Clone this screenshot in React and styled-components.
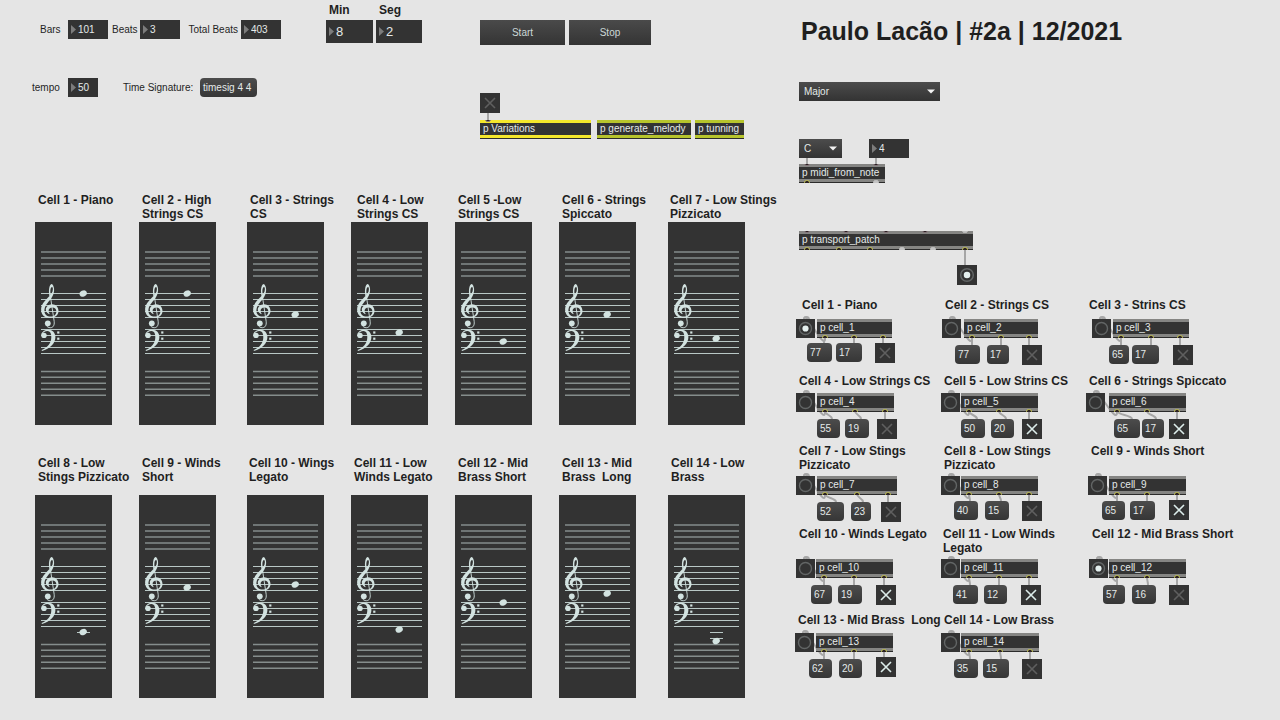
import styled, { createGlobalStyle } from 'styled-components';

const GlobalStyles = createGlobalStyle`
  * {
    box-sizing: border-box;
  }
  body {
    margin: 0;
    background: #e5e5e5;
    color: #1f1f1f;
    font: 10px/14px "Liberation Sans", Arial, sans-serif;
  }
  button, input, select {
    margin: 0;
    padding: 0;
    border: 0;
    border-radius: 0;
    font: inherit;
    color: #e4eae9;
  }
`;

const Patcher = styled.div`
  display: grid;
  grid-template-columns: 796fr 484fr;
`;

const Controls = styled.section`
  display: grid;
  grid-template-columns: 294fr 154fr 316fr;
  padding: 20px 0 54px 32px;
`;

const Row = styled.div`
  display: flex;
  align-items: center;
  gap: ${p => p.$gap || 0}px;
  padding-left: ${p => p.$indent || 0}px;
  margin-top: ${p => p.$top || 0}px;
`;

const Field = styled.label`
  display: flex;
  align-items: center;
`;

const FieldName = styled.span`
  width: ${p => p.$w}px;
  padding-right: ${p => (p.$end ? 3 : 0)}px;
  text-align: ${p => (p.$end ? 'right' : 'left')};
  white-space: nowrap;
`;

const Clock = styled.div`
  display: flex;
  align-items: flex-start;
  gap: 3px;
  margin-top: -17px;
`;

const ClockField = styled.label`
  display: flex;
  flex-direction: column;
  gap: 3px;
  font-size: 12px;
  font-weight: bold;
  span {
    padding-left: 3px;
  }
`;

const NumberFrame = styled.div`
  display: flex;
  align-items: center;
  gap: 2px;
  width: ${p => p.$w}px;
  height: ${p => (p.$large ? 23 : 19)}px;
  padding-left: 3px;
  background: #333;
  font-size: ${p => (p.$large ? 13 : 10)}px;
  font-weight: normal;
  svg {
    flex: none;
  }
  input {
    width: 100%;
    min-width: 0;
    background: none;
  }
`;

const TextButton = styled.button`
  width: ${p => p.$w}px;
  height: 25px;
  background: linear-gradient(#4a4a4a, #343434);
  color: #ccd8d7;
`;

const Message = styled.button`
  width: ${p => p.$w}px;
  height: 19px;
  padding: 0 3px;
  border-radius: 4px;
  background: linear-gradient(#4c4c4c, #363636);
  text-align: left;
  white-space: nowrap;
`;

const bands = {
  grey: '#858583',
  yellow: '#f4e72b',
  green: '#b7c52c',
};

const ObjectBox = styled.button`
  position: relative;
  display: block;
  width: ${p => p.$w}px;
  height: 19px;
  padding: 0 3px 1px;
  overflow: hidden;
  background: linear-gradient(
    ${p => bands[p.$band]} 3px,
    #333 3px 15px,
    ${p => bands[p.$band]} 15px 18px,
    #2b2b2b 18px
  );
  text-align: left;
  white-space: nowrap;
`;

const Port = styled.i`
  position: absolute;
  left: ${p => p.$x - 3}px;
  ${p => (p.$out ? 'bottom: -2px' : 'top: -3px')};
  width: 6px;
  height: 5px;
  border: 1px solid ${p => (p.$plain ? '#c4c4c4' : p.$out ? '#c3c353' : '#8f7f85')};
  border-radius: 3px;
  background: ${p => (p.$plain ? '#c4c4c4' : '#2c2224')};
`;

const MenuFrame = styled.div`
  position: relative;
  width: ${p => p.$w}px;
  height: 19px;
  select {
    appearance: none;
    width: 100%;
    height: 100%;
    padding: 0 5px;
    background: linear-gradient(#4c4c4c, #333);
  }
  svg {
    position: absolute;
    right: 5px;
    top: 7px;
    pointer-events: none;
  }
`;

const ToggleFrame = styled.span`
  display: grid;
  width: 20px;
  height: 20px;
  background: #333;
  input, svg {
    grid-area: 1 / 1;
  }
  input {
    appearance: none;
    width: 20px;
    height: 20px;
  }
  svg {
    pointer-events: none;
    stroke: #5f5f5f;
  }
  input:checked + svg {
    stroke: #dcecea;
  }
`;

const BangButton = styled.button`
  display: block;
  width: ${p => p.$size}px;
  height: ${p => p.$size}px;
  background: #333;
  svg {
    display: block;
  }
`;

const Canvas = styled.div`
  position: relative;
  height: ${p => p.$h}px;
`;

const Node = styled.div`
  position: absolute;
  left: ${p => p.$x}px;
  top: ${p => p.$y}px;
`;

const Wires = styled.svg`
  position: absolute;
  left: 0;
  top: 0;
  overflow: visible;
  fill: none;
  stroke: #a6a6a6;
  stroke-width: 2;
  pointer-events: none;
`;

const Staves = styled.section`
  display: grid;
  grid-template-columns: 104fr 108fr 104fr 104fr 104fr 109fr 128fr;
  padding-left: 35px;
  margin-bottom: 31px;
`;

const StaffTitle = styled.h2`
  height: ${p => p.$h}px;
  margin: 0;
  padding-left: ${p => p.$x}px;
  font-size: 12px;
  line-height: 14px;
  white-space: pre;
`;

const StaffPanel = styled.svg`
  display: block;
  background: #333;
`;

const PatchTitle = styled.h1`
  margin: 0 0 36px;
  padding: 16px 0 0 5px;
  font-size: 25px;
  line-height: 30px;
  white-space: nowrap;
`;

const MenuRow = styled.div`
  padding-left: 3px;
  margin-bottom: 38px;
`;

const CellRow = styled.section`
  display: grid;
  grid-template-columns: 145fr 145fr 194fr;
`;

const CellTitle = styled.h3`
  height: ${p => p.$h}px;
  margin: 0;
  padding-left: ${p => p.$x}px;
  font-size: 12px;
  line-height: 14px;
  white-space: pre;
`;

const NumberBox = ({ value, w, large, label }) => (
  <NumberFrame $w={w} $large={large}>
    <svg width="5" height="9" viewBox="0 0 5 9">
      <path d="M0 0L5 4.5L0 9Z" fill="#7c7c7c" />
    </svg>
    <input defaultValue={value} aria-label={label} />
  </NumberFrame>
);

const Menu = ({ w, label, options }) => (
  <MenuFrame $w={w}>
    <select aria-label={label}>
      {options.map(o => <option key={o}>{o}</option>)}
    </select>
    <svg width="8" height="5" viewBox="0 0 8 5">
      <path d="M0 0.5H8L4 4.5Z" fill="#f2f2f2" />
    </svg>
  </MenuFrame>
);

const Toggle = ({ on, label }) => (
  <ToggleFrame>
    <input type="checkbox" defaultChecked={on} aria-label={label} />
    <svg width="20" height="20" viewBox="0 0 20 20" strokeWidth="1.6">
      <path d="M5 5L15 15M15 5L5 15" />
    </svg>
  </ToggleFrame>
);

const Bang = ({ lit, label, size = 19 }) => (
  <BangButton aria-label={label} $size={size}>
    <svg width={size} height={size} viewBox="0 0 19 19">
      <circle cx="9.5" cy="9.5" r="6" fill="none" stroke="#626565" strokeWidth="1.4" />
      {lit && <circle cx="9.5" cy="9.5" r="3.1" fill="#e4efee" />}
    </svg>
  </BangButton>
);

const PatchObject = ({ w, band = 'grey', ins = [], outs = [], plain = [], children }) => (
  <ObjectBox $w={w} $band={band}>
    {ins.map(x => <Port key={`i${x}`} $x={x} $plain={plain.includes(`i${x}`)} />)}
    {outs.map(x => <Port key={`o${x}`} $x={x} $out $plain={plain.includes(`o${x}`)} />)}
    {children}
  </ObjectBox>
);

const ledgers = [137.5, 143.5];

const Staff = ({ title, note, head, tx = 3 }) => (
  <div>
    <StaffTitle $h={head} $x={tx}>{title}</StaffTitle>
    <StaffPanel width="77" height="203" viewBox="0 0 77 203">
      <g stroke="#858d8c" strokeWidth="1.6">
        {[30, 36, 42, 48, 54, 149.5, 155.3, 161.3, 167.3, 173.3].map(y => (
          <path key={y} d={`M6 ${y}H71`} />
        ))}
      </g>
      <g stroke="#b9c8c6">
        {[71.5, 77.5, 83.5, 89.5, 95.5, 107.5, 113.5, 119.5, 125.5, 131.5].map(y => (
          <path key={y} d={`M6 ${y}H71`} />
        ))}
        {ledgers.filter(y => y < note + 1).map(y => <path key={y} d={`M42 ${y}H55`} />)}
      </g>
      <g fill="#d3e3e1">
        <path d="M15 76C13 70 14 62 17 62C20.2 65 19.8 72 15.8 77C12.5 81 9.6 84 9.4 88.5C9.4 92.5 12 94.6 15.5 94.6C19.5 94.6 21.4 92 21.4 89.5C21.4 86.8 19.5 85.6 17.5 85.6C15 85.6 13.6 87 13.6 89C13.6 90.5 14.3 91.5 15.3 92.3C12.5 91.8 10.8 89.9 10.8 87.5C10.8 85 13.5 82.2 17 82.2C21 82.2 23.5 85.3 23.5 89C23.5 93 20 96 15 96C9.5 96 6.1 92.5 6.1 87.5C6.1 83 9.3 79.3 12.3 76.3C16 72.7 17.9 70.5 17.9 67C17.9 65.6 17.3 65 16.8 65C15.4 65.8 15 69 15.8 73Z" />
        <path
          d="M15.2 73L19.2 99.5C19.6 103.5 18 105.7 15.4 105.7C13.6 105.7 12 104.9 11 103"
          fill="none"
          stroke="#d3e3e1"
          strokeWidth="0.9"
        />
        <circle cx="12.8" cy="101.3" r="2.9" />
        <path d="M6.2 113C6.6 109.6 10 107.7 13.4 107.7C17.6 107.7 20.4 110.8 20.4 115C20.4 121.5 15 126.7 7 128.9L6.6 128.1C13 125.3 16.3 121 16.3 115C16.3 111 15 108.9 12.5 108.9C10 108.9 8 110.2 7.6 112Z" />
        <circle cx="9" cy="113.4" r="2.7" />
        <rect x="22.2" y="109.4" width="2.2" height="2.2" />
        <rect x="22.2" y="115.6" width="2.2" height="2.2" />
        <ellipse cx="48.2" cy={note} rx="3.8" ry="3" transform={`rotate(-28 48.2 ${note})`} />
      </g>
    </StaffPanel>
  </div>
);

const upperStaves = [
  { title: 'Cell 1 - Piano', note: 71.5 },
  { title: 'Cell 2 - High\nStrings CS', note: 71.5 },
  { title: 'Cell 3 - Strings\nCS', note: 92.5 },
  { title: 'Cell 4 - Low\nStrings CS', note: 110.5, tx: 6 },
  { title: 'Cell 5 -Low\nStrings CS', note: 119.5 },
  { title: 'Cell 6 - Strings\nSpiccato', note: 92.5 },
  { title: 'Cell 7 - Low Stings\nPizzicato', note: 116.5, tx: 2 },
];

const lowerStaves = [
  { title: 'Cell 8 - Low\nStings Pizzicato', note: 137 },
  { title: 'Cell 9 - Winds\nShort', note: 92.5 },
  { title: 'Cell 10 - Wings\nLegato', note: 89.5, tx: 2 },
  { title: 'Cell 11 - Low\nWinds Legato', note: 134.5 },
  { title: 'Cell 12 - Mid\nBrass Short', note: 107.5 },
  { title: 'Cell 13 - Mid\nBrass  Long', note: 98.5 },
  { title: 'Cell 14 - Low\nBrass', note: 146 },
];

// obj is [x, width] of the subpatch, a and b are [x, width, value] of its message boxes
const cellRows = [
  { head: 21, body: 55, cells: [
    { n: 1, title: 'Cell 1 - Piano', tx: 6, bang: 0, lit: true, obj: [21, 75], a: [11, 25, 77], b: [40, 26, 17], my: 24, t: 79, ty: 24 },
    { n: 2, title: 'Cell 2 - Strings CS', tx: 4, bang: 1, obj: [23, 74], a: [14, 25, 77], b: [46, 22, 17], my: 26, t: 81, ty: 26 },
    { n: 3, title: 'Cell 3 - Strins CS', tx: 3, bang: 6, obj: [27, 76], a: [23, 20, 65], b: [46, 27, 17], my: 26, t: 87, ty: 26 },
  ] },
  { head: 19, body: 51, cells: [
    { n: 4, title: 'Cell 4 - Low Strings CS', tx: 3, bang: 0, obj: [21, 77], a: [21, 23, 55], b: [49, 24, 19], my: 26, t: 81, ty: 26 },
    { n: 5, title: 'Cell 5 - Low Strins CS', tx: 3, bang: 0, obj: [20, 77], a: [20, 24, 50], b: [50, 23, 20], my: 26, t: 81, ty: 26, on: true },
    { n: 6, title: 'Cell 6 - Strings Spiccato', tx: 3, bang: 0, obj: [23, 77], a: [28, 26, 65], b: [56, 22, 17], my: 26, t: 83, ty: 26, on: true },
  ] },
  { head: 32, body: 51, cells: [
    { n: 7, title: 'Cell 7 - Low Stings\nPizzicato', tx: 3, bang: 0, obj: [21, 80], a: [21, 27, 52], b: [55, 20, 23], my: 26, t: 85, ty: 26 },
    { n: 8, title: 'Cell 8 - Low Stings\nPizzicato', tx: 3, bang: 0, obj: [20, 77], a: [13, 24, 40], b: [44, 24, 15], my: 25, t: 81, ty: 25 },
    { n: 9, title: 'Cell 9 - Winds Short', tx: 5, bang: 2, obj: [23, 77], a: [16, 23, 65], b: [44, 25, 17], my: 25, t: 83, ty: 24, on: true },
  ] },
  { head: 32, body: 54, cells: [
    { n: 10, title: 'Cell 10 - Winds Legato', tx: 3, bang: 0, obj: [20, 77], a: [15, 21, 67], b: [42, 24, 19], my: 26, t: 80, ty: 26, on: true },
    { n: 11, title: 'Cell 11 - Low Winds\nLegato', tx: 2, bang: 0, obj: [20, 77], a: [12, 25, 41], b: [43, 23, 12], my: 26, t: 80, ty: 26, on: true },
    { n: 12, title: 'Cell 12 - Mid Brass Short', tx: 6, bang: 3, lit: true, obj: [23, 77], a: [17, 22, 57], b: [46, 24, 16], my: 26, t: 83, ty: 26 },
  ] },
  { head: 20, body: 54, cells: [
    { n: 13, title: 'Cell 13 - Mid Brass  Long', tx: 2, bang: -1, obj: [20, 77], a: [13, 23, 62], b: [43, 23, 20], my: 26, t: 80, ty: 24, on: true },
    { n: 14, title: 'Cell 14 - Low Brass', tx: 3, bang: 0, obj: [20, 78], a: [13, 24, 35], b: [42, 26, 15], my: 26, t: 81, ty: 26 },
  ] },
];

const wire = (x1, y1, x2, y2) => {
  const bend = (y2 - y1) / 2;
  return `M${x1} ${y1}C${x1} ${y1 + bend} ${x2} ${y2 - bend} ${x2} ${y2}`;
};

const Cell = ({ cell, head, body }) => {
  const { n, title, tx, bang, lit, obj, a, b, my, t, ty, on } = cell;
  const outs = [8, Math.floor(obj[1] / 2), obj[1] - 9];
  const [o1, o2, o3] = outs.map(x => x + obj[0]);
  return (
    <div>
      <CellTitle $h={head} $x={tx}>{title}</CellTitle>
      <Canvas $h={body}>
        <Wires width="100" height="50">
          <path d={`M${bang + 8} 1C${bang + 8} -13 ${o1} 34 ${o1} 19`} />
          <path d={`M${bang + 8} 1C${bang + 8} -3 ${bang + 13} -3 ${bang + 13} 1`} />
          <path d={wire(o1, 18, a[0] + a[1] - 8, my)} />
          <path d={wire(o2, 18, b[0] + b[1] - 8, my)} />
          <path d={`M${o3} 18V${ty}`} />
        </Wires>
        <Node $x={bang} $y={0}><Bang lit={lit} label={`Trigger cell ${n}`} /></Node>
        <Node $x={obj[0]} $y={0}><PatchObject w={obj[1]} outs={outs}>p cell_{n}</PatchObject></Node>
        <Node $x={a[0]} $y={my}><Message $w={a[1]}>{a[2]}</Message></Node>
        <Node $x={b[0]} $y={my}><Message $w={b[1]}>{b[2]}</Message></Node>
        <Node $x={t} $y={ty}><Toggle on={on} label={`Cell ${n} active`} /></Node>
      </Canvas>
    </div>
  );
};

const App = () => (
  <Patcher>
    <GlobalStyles />
    <main>
      <Controls>
        <div>
          <Row $gap={4} $indent={8}>
            <Field><FieldName $w={28}>Bars</FieldName><NumberBox value="101" w={40} /></Field>
            <Field><FieldName $w={28}>Beats</FieldName><NumberBox value="3" w={40} /></Field>
            <Field><FieldName $w={57} $end>Total Beats</FieldName><NumberBox value="403" w={40} /></Field>
          </Row>
          <Row $gap={25} $top={39}>
            <Field><FieldName $w={36}>tempo</FieldName><NumberBox value="50" w={30} /></Field>
            <Field as="div">
              <FieldName $w={77}>Time Signature:</FieldName>
              <Message $w={57}>timesig 4 4</Message>
            </Field>
          </Row>
        </div>
        <Clock>
          <ClockField><span>Min</span><NumberBox value="8" w={47} large /></ClockField>
          <ClockField><span>Seg</span><NumberBox value="2" w={46} large /></ClockField>
        </Clock>
        <div>
          <Row $gap={4}>
            <TextButton $w={85}>Start</TextButton>
            <TextButton $w={82}>Stop</TextButton>
          </Row>
          <Row $top={48}>
            <Canvas $h={46}>
              <Wires width="20" height="30"><path d="M8 18V28" /></Wires>
              <Node $x={0} $y={0}><Toggle label="Variations" /></Node>
              <Node $x={0} $y={27}><PatchObject w={111} band="yellow" ins={[8]}>p Variations</PatchObject></Node>
              <Node $x={117} $y={27}><PatchObject w={94} band="green">p generate_melody</PatchObject></Node>
              <Node $x={215} $y={27}><PatchObject w={49} band="green">p tunning</PatchObject></Node>
            </Canvas>
          </Row>
        </div>
      </Controls>
      <Staves>
        {upperStaves.map(s => <Staff key={s.title} head={29} {...s} />)}
      </Staves>
      <Staves>
        {lowerStaves.map(s => <Staff key={s.title} head={39} {...s} />)}
      </Staves>
    </main>
    <aside>
      <PatchTitle>Paulo Lacão | #2a | 12/2021</PatchTitle>
      <MenuRow>
        <Menu w={141} label="Scale" options={['Major', 'Minor']} />
      </MenuRow>
      <Canvas $h={159}>
        <Wires width="200" height="150">
          <path d="M11 18V27M80 18V27M169 110V127" />
        </Wires>
        <Node $x={3} $y={0}><Menu w={43} label="Root note" options={['C', 'D', 'E', 'F', 'G', 'A', 'B']} /></Node>
        <Node $x={73} $y={0}><NumberBox value="4" w={40} label="Octave" /></Node>
        <Node $x={3} $y={25}>
          <PatchObject w={86} ins={[8, 77]} outs={[8, 77]} plain={['o77']}>p midi_from_note</PatchObject>
        </Node>
        <Node $x={3} $y={92}>
          <PatchObject
            w={174}
            ins={[8, 47, 87, 126, 166]}
            outs={[8, 40, 71, 103, 134, 166]}
            plain={['i166', 'o103', 'o134']}
          >
            p transport_patch
          </PatchObject>
        </Node>
        <Node $x={161} $y={126}><Bang lit size={20} label="Transport bang" /></Node>
      </Canvas>
      {cellRows.map(row => (
        <CellRow key={row.cells[0].n}>
          {row.cells.map(cell => (
            <Cell key={cell.n} cell={cell} head={row.head} body={row.body} />
          ))}
        </CellRow>
      ))}
    </aside>
  </Patcher>
);

export default App;
